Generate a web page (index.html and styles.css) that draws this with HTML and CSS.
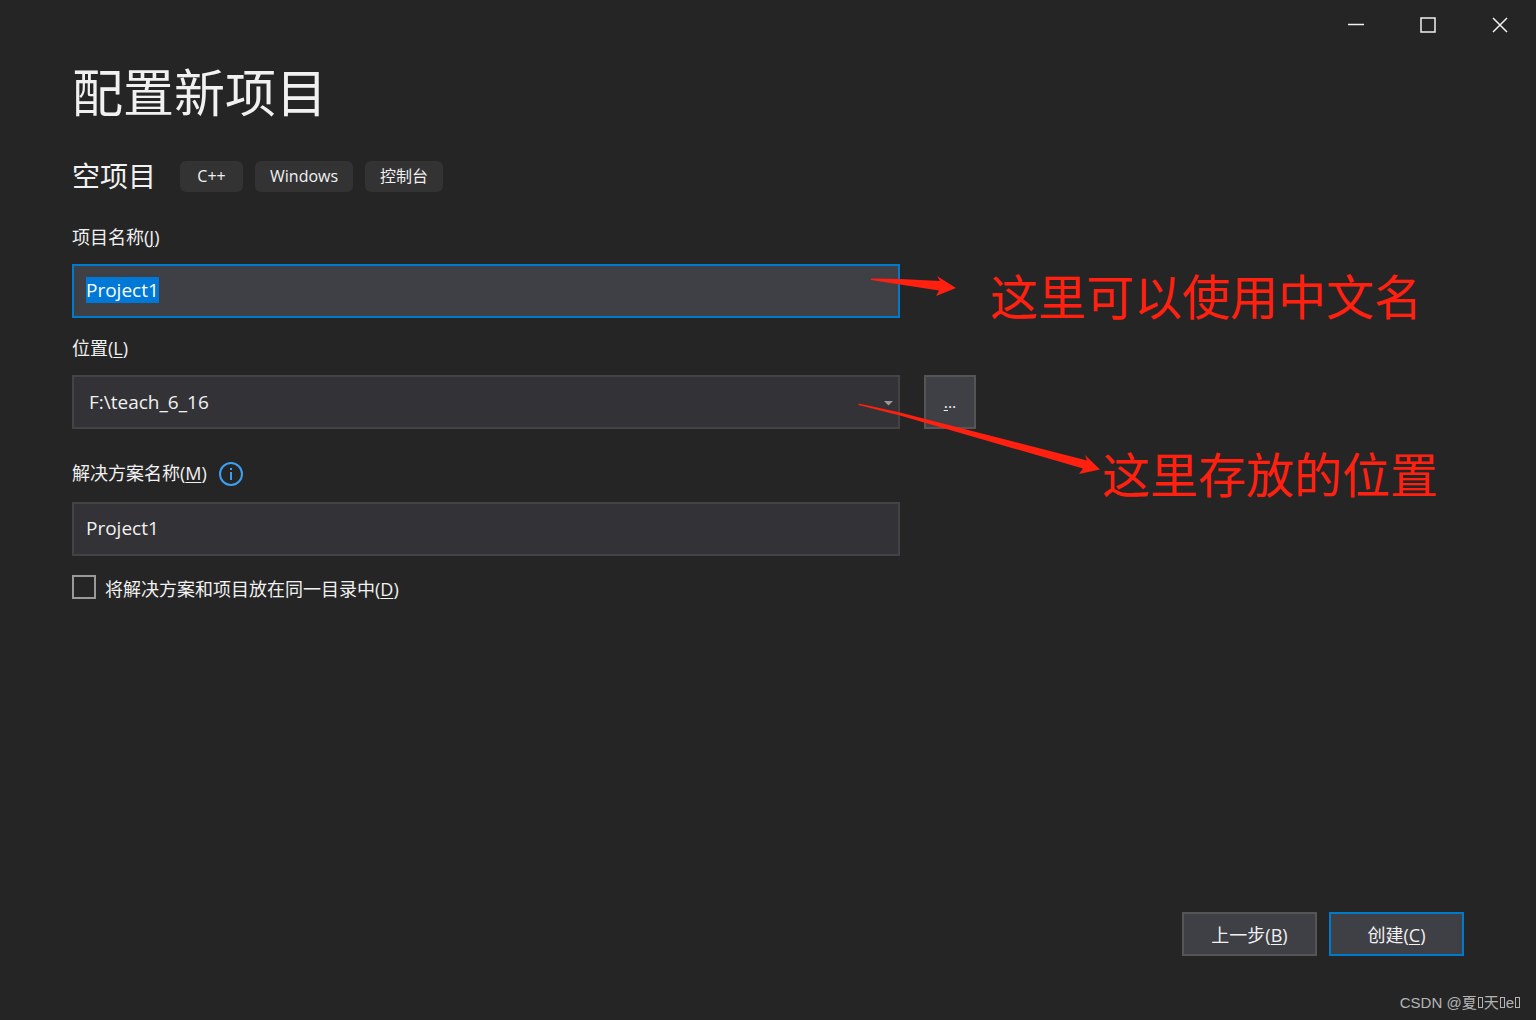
FILE: index.html
```html
<!DOCTYPE html>
<html lang="zh-CN">
<head>
  <meta charset="UTF-8">
  <title>配置新项目</title>
  <meta name="viewport" content="width=device-width, initial-scale=1.0">
  <link rel="stylesheet" href="styles.css">
</head>
<body>

  <header class="titlebar">
    <button type="button" aria-label="最小化">
      <svg width="16" height="16" viewBox="0 0 16 16"><path d="M0 7.5H16"/></svg>
    </button>
    <button type="button" aria-label="最大化">
      <svg width="16" height="16" viewBox="0 0 16 16"><path d="M1 1H15V15H1Z"/></svg>
    </button>
    <button type="button" aria-label="关闭">
      <svg width="16" height="16" viewBox="0 0 16 16"><path d="M1 1L15 15M15 1L1 15"/></svg>
    </button>
  </header>

  <form class="dialog">
    <main>
      <h1>配置新项目</h1>

      <div class="template">
        <h2>空项目</h2>
        <ul class="tags">
          <li>C++</li>
          <li>Windows</li>
          <li>控制台</li>
        </ul>
      </div>

      <div class="field">
        <label for="project">项目名称(<u>J</u>)</label>
        <input type="text" id="project" value="Project1" autofocus>
      </div>

      <div class="field">
        <label for="location">位置(<u>L</u>)</label>
        <div class="location-row">
          <div class="combo">
            <select id="location">
              <option>F:\teach_6_16</option>
            </select>
            <svg class="caret" width="10" height="5" viewBox="0 0 10 5"><path d="M0 0H9L4.5 4.5Z"/></svg>
          </div>
          <button type="button" class="btn browse" aria-label="浏览"><u>.</u>..</button>
        </div>
      </div>

      <div class="field solution">
        <div class="label-row">
          <label for="solution">解决方案名称(<u>M</u>)</label>
          <svg class="info" width="24" height="24" viewBox="0 0 24 24">
            <circle cx="12" cy="12" r="11"/>
            <path d="M12 10V18M12 6V8"/>
          </svg>
        </div>
        <input type="text" id="solution" value="Project1">
      </div>

      <label class="check">
        <input type="checkbox">
        <span>将解决方案和项目放在同一目录中(<u>D</u>)</span>
      </label>
    </main>

    <footer>
      <button type="button" class="btn">上一步(<u>B</u>)</button>
      <button type="submit" class="btn primary">创建(<u>C</u>)</button>
    </footer>
  </form>

  <!-- Annotations -->
  <svg class="arrows" width="1110" height="500" viewBox="0 0 1110 500">
    <path d="M871 278.500L900 279L940 281L937 276L956 288L936 296L939 290.500L900 284.500L871 280Z"/>
    <path d="M858.500 403.500L900 412.500L1087 460.500L1085 455L1100 469.500L1079 474L1083 468.500L900 415.500L858.500 405Z"/>
  </svg>
  <p class="note note-name">这里可以使用中文名</p>
  <p class="note note-location">这里存放的位置</p>

  <p class="watermark">CSDN @夏<i></i>天<i></i>e<i></i></p>

  <script>
    document.getElementById("project").select();
  </script>
</body>
</html>
```

FILE: styles.css
```css
* {
  box-sizing: border-box;
}

body {
  margin: 0;
  min-height: 100vh;
  display: flex;
  flex-direction: column;
  position: relative;
  background-color: #252526;
  color: #f1f1f1;
  font-family: "Open Sans", "Noto Sans CJK SC", sans-serif;
  font-size: 18px;
}

h1, h2, p, ul {
  margin: 0;
  padding: 0;
  font-weight: 400;
}

input, select, button {
  font: inherit;
  color: inherit;
}

u {
  text-underline-offset: 2px;
}

.titlebar {
  display: flex;
  justify-content: flex-end;
}

.titlebar button {
  display: flex;
  align-items: center;
  justify-content: center;
  width: 72px;
  height: 50px;
  padding: 0;
  border: none;
  background: none;
}

.titlebar svg {
  fill: none;
  stroke: #f1f1f1;
  stroke-width: 1.5;
}

.dialog {
  flex: 1;
  display: flex;
  flex-direction: column;
  justify-content: space-between;
  padding: 10px 72px 64px;
}

h1 {
  font-size: 51px;
  line-height: 64px;
}

.template {
  display: flex;
  align-items: center;
  gap: 24px;
  margin-top: 37px;
}

h2 {
  font-size: 28px;
  line-height: 31px;
}

.tags {
  display: flex;
  gap: 12px;
  list-style: none;
}

.tags li {
  min-width: 63px;
  padding: 0 15px;
  border-radius: 6px;
  background-color: #333334;
  font-size: 16px;
  line-height: 31px;
  text-align: center;
}

.field {
  display: flex;
  flex-direction: column;
  gap: 14px;
  max-width: 828px;
  margin-top: 18px;
  line-height: 25px;
}

.template + .field {
  margin-top: 33px;
}

.field.solution {
  margin-top: 30px;
}

.label-row {
  display: flex;
  align-items: center;
  gap: 12px;
  height: 29px;
}

.info {
  fill: none;
  stroke: #3ba0f3;
  stroke-width: 2;
}

.field input,
.field select {
  width: 100%;
  height: 54px;
  padding: 0 12px;
  border: 2px solid #434346;
  border-radius: 0;
  outline: none;
  background-color: #333337;
  font-size: 19px;
}

.field input {
  padding-bottom: 2px;
}

.field input:focus {
  border-color: #007acc;
  background-color: #3f3f46;
}

.field input::selection {
  background-color: #0078d7;
  color: #fff;
}

.location-row {
  display: flex;
  gap: 24px;
  margin-right: -76px;
}

.combo {
  flex: 1;
  position: relative;
}

.field select {
  display: block;
  padding: 0 15px;
  appearance: none;
}

.caret {
  position: absolute;
  right: 6px;
  top: 26px;
  fill: #999;
  pointer-events: none;
}

.btn {
  width: 135px;
  height: 44px;
  padding: 0;
  border: 2px solid #555;
  background-color: #3f3f46;
}

.btn.browse {
  width: 52px;
  height: 54px;
  font-size: 16px;
}

.btn.primary {
  border-color: #007acc;
}

.check {
  display: flex;
  gap: 9px;
  width: fit-content;
  margin-top: 19px;
  line-height: 28px;
}

.check input {
  appearance: none;
  width: 24px;
  height: 24px;
  margin: 0;
  border: 2px solid #999;
}

footer {
  display: flex;
  justify-content: flex-end;
  gap: 12px;
}

.arrows {
  position: absolute;
  left: 0;
  top: 0;
  fill: #ff2010;
  pointer-events: none;
}

.note {
  position: absolute;
  color: #ff2010;
  font-size: 48px;
  line-height: 60px;
  white-space: nowrap;
}

.note-name {
  left: 990px;
  top: 267px;
}

.note-location {
  left: 1102px;
  top: 445px;
}

.watermark {
  position: absolute;
  right: 15px;
  bottom: 6px;
  color: #b4b4b4;
  font-family: "Liberation Sans", "Noto Sans CJK SC", sans-serif;
  font-size: 15px;
  line-height: 22px;
}

/* empty glyph boxes in the user name */
.watermark i {
  display: inline-block;
  width: 5px;
  height: 11px;
  margin: 0 1px;
  border: 1px solid #b4b4b4;
}
```
